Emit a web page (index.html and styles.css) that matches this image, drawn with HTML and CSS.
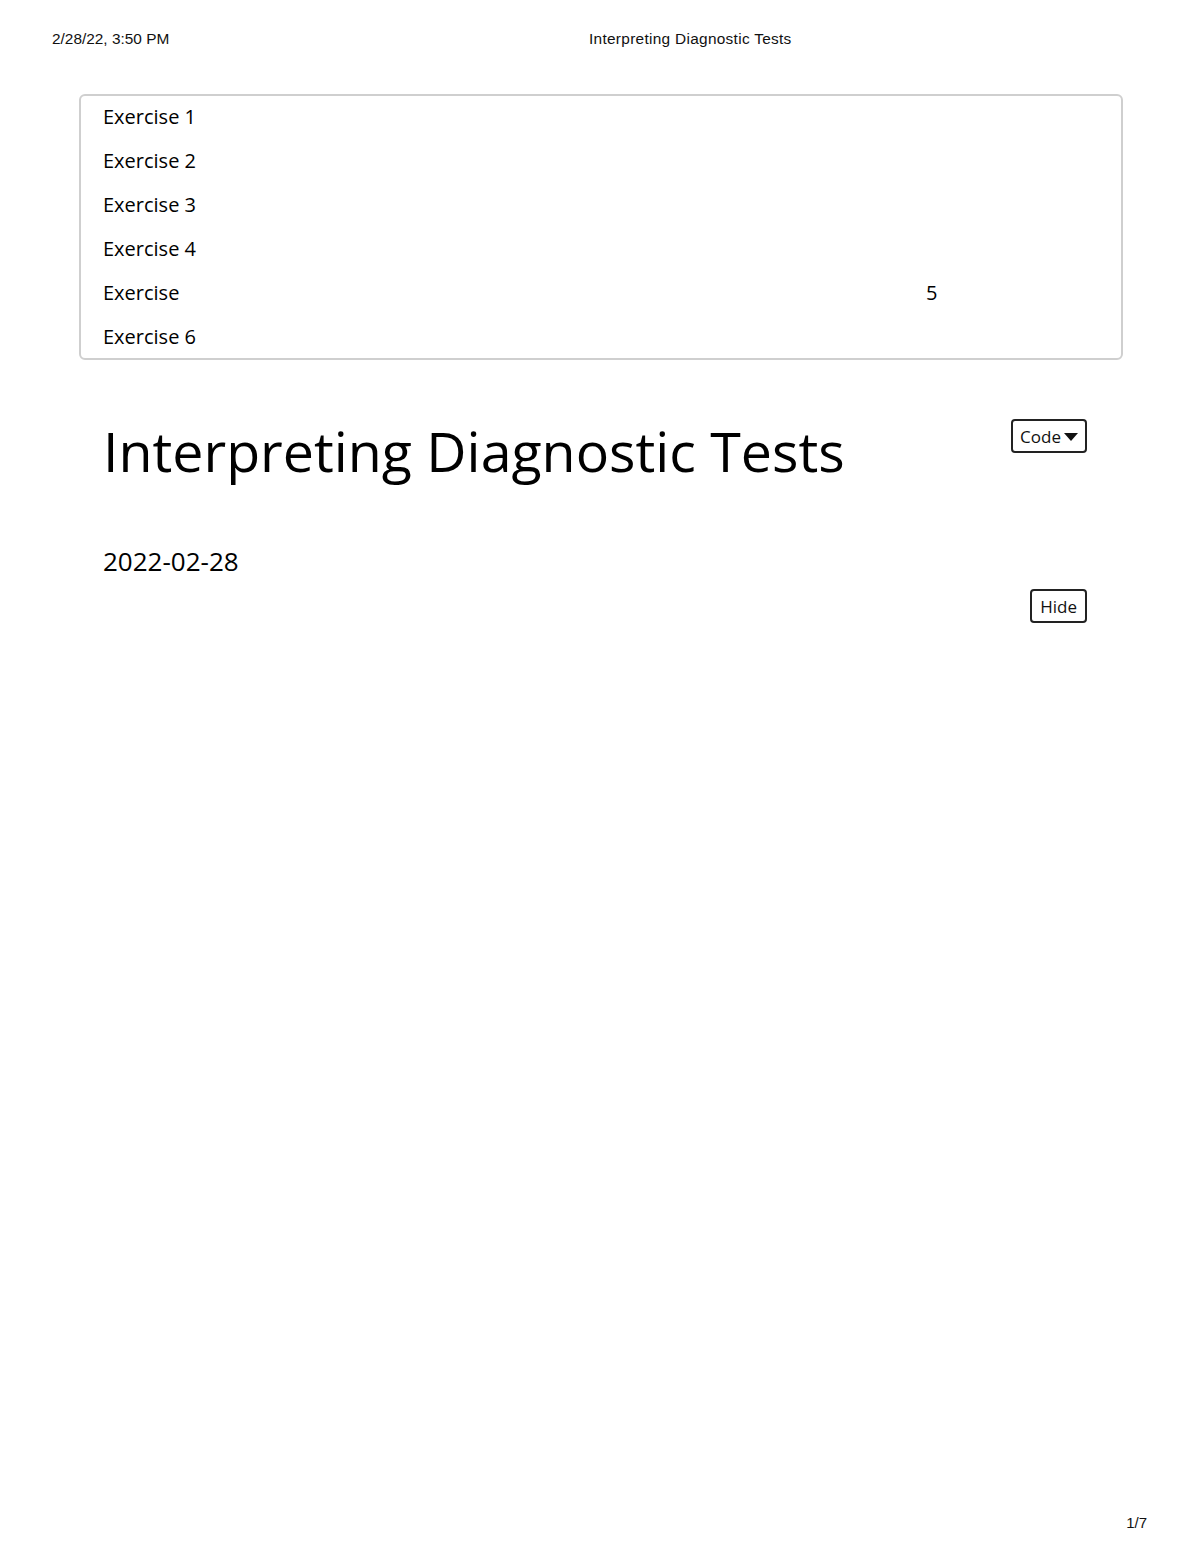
FILE: index.html
```html
<!DOCTYPE html>
<html>
<head>
<meta charset="utf-8">
<title>Interpreting Diagnostic Tests</title>
<link rel="stylesheet" href="styles.css">
</head>
<body>
<div class="page">
  <header class="pagehead">
    <span class="stamp">2/28/22, 3:50 PM</span>
    <span class="doctitle">Interpreting Diagnostic Tests</span>
  </header>

  <nav class="toc">
    <div class="toc-item">Exercise 1</div>
    <div class="toc-item">Exercise 2</div>
    <div class="toc-item">Exercise 3</div>
    <div class="toc-item">Exercise 4</div>
    <div class="toc-item toc-split"><span>Exercise</span><span>5</span></div>
    <div class="toc-item">Exercise 6</div>
  </nav>

  <main class="main">
    <div class="titlerow">
      <h1 class="title">Interpreting Diagnostic Tests</h1>
      <button class="btn btn-code">Code<span class="caret"></span></button>
    </div>
    <div class="date">2022-02-28</div>
    <div class="hiderow">
      <button class="btn btn-hide">Hide</button>
    </div>
  </main>

  <footer class="pagefoot">1/7</footer>
</div>
</body>
</html>
```

FILE: styles.css
```css
html, body {
  margin: 0;
  padding: 0;
  background: #ffffff;
}

.page {
  width: 1200px;
  height: 1553px;
  display: flex;
  flex-direction: column;
  color: #000;
  font-family: "Open Sans", "Noto Sans", sans-serif;
}

.pagehead {
  display: flex;
  align-items: center;
  padding: 29px 0 0 52px;
  height: 19px;
  font-family: "Liberation Sans", Arial, sans-serif;
  font-size: 15.4px;
  color: #111;
}

.stamp {
  width: 537px;
}

.doctitle {
  letter-spacing: 0.3px;
}

.toc {
  margin: 46px 77px 0 79px;
  border: 2px solid #cfcfcf;
  border-radius: 6px;
  padding: 0 22px;
  font-size: 20px;
}

.toc-item {
  height: 44px;
  line-height: 44px;
}

.toc-item:first-child {
  margin-top: -1px;
}

.toc-item:last-child {
  margin-bottom: -1px;
}

.toc-split {
  display: grid;
  grid-template-columns: 823px auto;
}

.main {
  padding: 0 113px 0 103px;
  display: flex;
  flex-direction: column;
}

.titlerow {
  display: flex;
  justify-content: space-between;
  align-items: flex-start;
  margin-top: 53px;
}

.title {
  margin: 0;
  font-size: 55.5px;
  font-weight: 400;
  line-height: 75px;
}

.btn {
  font-family: "Open Sans", "Noto Sans", sans-serif;
  font-size: 17px;
  color: #111;
  background: #fff;
  border: 2px solid #222;
  border-radius: 4px;
  padding: 0 7px;
  height: 34px;
  display: flex;
  align-items: center;
}

.btn-code {
  margin-top: 6px;
  padding: 0 7px 0 7px;
}

.caret {
  display: inline-block;
  width: 0;
  height: 0;
  margin-left: 3px;
  margin-top: 2px;
  border-left: 7px solid transparent;
  border-right: 7px solid transparent;
  border-top: 8px solid #111;
}

.date {
  margin-top: 55px;
  font-size: 26px;
  line-height: 36px;
}

.hiderow {
  display: flex;
  justify-content: flex-end;
  margin-top: 10px;
}

.btn-hide {
  padding: 0 8px;
}

.pagefoot {
  margin-top: auto;
  margin-bottom: 22px;
  align-self: flex-end;
  margin-right: 53px;
  font-family: "Liberation Sans", Arial, sans-serif;
  font-size: 15px;
  color: #111;
}
```
